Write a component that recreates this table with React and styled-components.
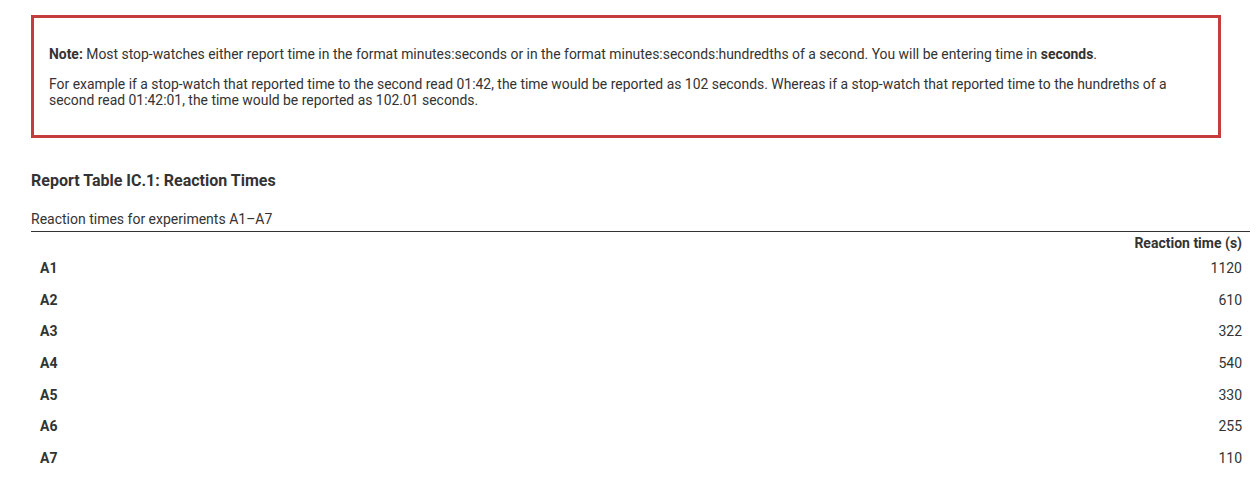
import React from "react";
import styled, { createGlobalStyle } from "styled-components";

const GlobalStyle = createGlobalStyle`
  body {
    margin: 0;
    background: #ffffff;
    font-family: Roboto, "Liberation Sans", Arial, sans-serif;
    color: #333333;
  }
`;

const Page = styled.main`
  padding: 15px 8px 0 31px;
`;

const NoteBox = styled.div`
  width: 1190px;
  box-sizing: border-box;
  border: 3px solid #c43d3d;
  padding: 14px 15px 13px;
  font-size: 13.92px;
  line-height: 16px;

  p {
    margin: 14px 0;
  }
`;

const TableTitle = styled.h2`
  margin: 33px 0 0;
  font-size: 16px;
  line-height: 20px;
  font-weight: 700;
  color: #333333;
`;

const Table = styled.table`
  width: 100%;
  border-collapse: collapse;
  margin-top: 20px;
  font-size: 14px;
  line-height: 16px;
`;

const Caption = styled.caption`
  text-align: left;
  font-size: 14px;
  line-height: 16px;
  padding-bottom: 4px;
  border-bottom: 1px solid #333333;
`;

const HeadCell = styled.th`
  text-align: ${(p) => (p.$right ? "right" : "left")};
  font-weight: 700;
  padding: 3px 8px 1px;
`;

const Cell = styled.td`
  text-align: ${(p) => (p.$right ? "right" : "left")};
  font-weight: ${(p) => (p.$bold ? 700 : 400)};
  padding: 8px 8px 7.7px 9px;
`;

const rows = [
  ["A1", 1120],
  ["A2", 610],
  ["A3", 322],
  ["A4", 540],
  ["A5", 330],
  ["A6", 255],
  ["A7", 110],
];

export default function App() {
  return (
    <Page>
      <GlobalStyle />
      <NoteBox>
        <p>
          <strong>Note:</strong> Most stop-watches either report time in the format minutes:seconds or in the
          format minutes:seconds:hundredths of a second. You will be entering time in <strong>seconds</strong>.
        </p>
        <p>
          For example if a stop-watch that reported time to the second read 01:42, the time would be reported
          as 102 seconds. Whereas if a stop-watch that reported time to the hundreths of a second read 01:42:01,
          the time would be reported as 102.01 seconds.
        </p>
      </NoteBox>

      <TableTitle>Report Table IC.1: Reaction Times</TableTitle>

      <Table>
        <Caption>Reaction times for experiments A1–A7</Caption>
        <thead>
          <tr>
            <HeadCell />
            <HeadCell $right>Reaction time (s)</HeadCell>
          </tr>
        </thead>
        <tbody>
          {rows.map(([name, value]) => (
            <tr key={name}>
              <Cell $bold>{name}</Cell>
              <Cell $right>{value}</Cell>
            </tr>
          ))}
        </tbody>
      </Table>
    </Page>
  );
}
